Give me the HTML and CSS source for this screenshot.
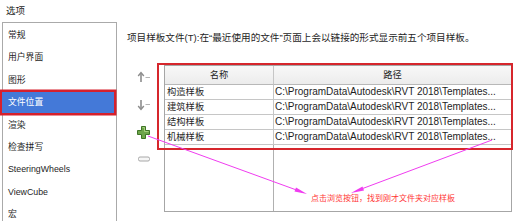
FILE: index.html
```html
<!DOCTYPE html>
<html lang="zh-CN">
<head>
<meta charset="utf-8">
<title>选项</title>
<link rel="stylesheet" href="styles.css">
</head>
<body>
<div class="page">
  <div class="title">选项</div>
  <div class="layout">
    <ul class="nav">
      <li class="nav-item">常规</li>
      <li class="nav-item">用户界面</li>
      <li class="nav-item">图形</li>
      <li class="nav-item selected">文件位置</li>
      <li class="nav-item">渲染</li>
      <li class="nav-item">检查拼写</li>
      <li class="nav-item">SteeringWheels</li>
      <li class="nav-item">ViewCube</li>
      <li class="nav-item">宏</li>
    </ul>
    <div class="content">
      <p class="desc">项目样板文件(T):在“最近使用的文件”页面上会以链接的形式显示前五个项目样板。</p>
      <div class="editor">
        <div class="tools">
          <svg class="tool" width="14" height="12" viewBox="0 0 14 12">
            <path d="M4 2.5 V11" stroke="#8c8c8c" stroke-width="1.6" fill="none"/>
            <path d="M1.2 5 L4 1.5 L6.8 5" stroke="#8c8c8c" stroke-width="1.4" fill="none"/>
            <path d="M8.5 6.5 H13" stroke="#b4b4b4" stroke-width="1" fill="none"/>
          </svg>
          <svg class="tool" width="14" height="12" viewBox="0 0 14 12">
            <path d="M4 1 V9.5" stroke="#8c8c8c" stroke-width="1.6" fill="none"/>
            <path d="M1.2 7 L4 10.5 L6.8 7" stroke="#8c8c8c" stroke-width="1.4" fill="none"/>
            <path d="M8.5 5.5 H13" stroke="#b4b4b4" stroke-width="1" fill="none"/>
          </svg>
          <svg class="tool" width="14" height="14" viewBox="0 0 14 14">
            <path d="M4.5 0.5 H8.5 V4.5 H12.5 V8.5 H8.5 V12.5 H4.5 V8.5 H0.5 V4.5 H4.5 Z" fill="#6ea54a" stroke="#3f7427" stroke-width="1"/>
            <path d="M5.5 1.5 H7.5 V5.5 H11.5" stroke="#a6d07f" stroke-width="1" fill="none"/>
          </svg>
          <svg class="tool" width="14" height="6" viewBox="0 0 14 6">
            <rect x="1.5" y="1" width="11" height="4" rx="1.5" fill="#f6f6f6" stroke="#a8a8a8" stroke-width="1"/>
          </svg>
        </div>
        <div class="grid">
          <div class="cell head">名称</div>
          <div class="cell head last">路径</div>
          <div class="cell name">构造样板</div>
          <div class="cell path last">C:\ProgramData\Autodesk\RVT 2018\Templates...</div>
          <div class="cell name">建筑样板</div>
          <div class="cell path last">C:\ProgramData\Autodesk\RVT 2018\Templates...</div>
          <div class="cell name">结构样板</div>
          <div class="cell path last">C:\ProgramData\Autodesk\RVT 2018\Templates...</div>
          <div class="cell name">机械样板</div>
          <div class="cell path last">C:\ProgramData\Autodesk\RVT 2018\Templates...</div>
          <div class="cell filler"></div>
          <div class="cell filler last"></div>
        </div>
      </div>
    </div>
  </div>

  <div class="callout-box"></div>
  <svg class="arrows" width="520" height="221" viewBox="0 0 520 221">
    <line x1="148" y1="136" x2="302" y2="192" stroke="#f03cf0" stroke-width="1"/>
    <polygon points="307,194 296,187.5 294.5,191.5" fill="#f03cf0"/>
    <line x1="492" y1="140" x2="356" y2="191" stroke="#f03cf0" stroke-width="1"/>
    <polygon points="351,193 362.5,186.5 364,190.5" fill="#f03cf0"/>
  </svg>
  <div class="callout-text">点击浏览按钮，找到刚才文件夹对应样板</div>
</div>
</body>
</html>
```

FILE: styles.css
```css
* { box-sizing: border-box; }

html, body {
  margin: 0;
  padding: 0;
  background: #ffffff;
}

.page {
  position: relative;
  width: 520px;
  height: 221px;
  overflow: hidden;
  font-family: "Liberation Sans", "Noto Sans CJK SC", sans-serif;
  font-size: 9.5px;
  color: #1e1e1e;
}

.title {
  height: 22px;
  line-height: 22px;
  padding-left: 6px;
  font-size: 9.5px;
}

.layout {
  display: flex;
  align-items: flex-start;
}

.nav {
  list-style: none;
  margin: 0 0 0 2px;
  padding: 1px 0 0 0;
  width: 115px;
  height: 210px;
  border: 1px solid #aaaaaa;
  border-bottom: none;
  flex: none;
  font-size: 8.8px;
}

.nav-item {
  height: 22.4px;
  line-height: 22.4px;
  padding-left: 5px;
  white-space: nowrap;
}

.nav-item.selected {
  background: #4479d8;
  color: #ffffff;
  margin: 0 1px 0 -2px;
  padding-left: 7px;
  box-shadow: 0 0 0 1.5px #d6202c, inset 0 0 0 1px #d6202c;
}

.content {
  margin-left: 10px;
  flex: 1;
}

.desc {
  margin: 9px 0 0 0;
  line-height: 14px;
  font-size: 9.6px;
  white-space: nowrap;
}

.editor {
  display: flex;
  margin-top: 20px;
}

.tools {
  width: 37px;
  padding: 6px 0 0 10px;
  display: flex;
  flex-direction: column;
  align-items: flex-start;
  gap: 15.5px;
}

.tool {
  display: block;
}

.grid {
  width: 348px;
  height: 147px;
  display: grid;
  grid-template-columns: 109px 1fr;
  grid-template-rows: 19px repeat(4, 15px) 1fr;
  border: 1px solid #a6a6a6;
}

.cell {
  border-right: 1px solid #c6c6c6;
  border-bottom: 1px solid #c6c6c6;
  padding-left: 2px;
  line-height: 14px;
  white-space: nowrap;
  overflow: hidden;
}

.cell.name {
  font-size: 9.3px;
}

.cell.path {
  font-size: 10px;
  padding-left: 1px;
}

.cell.last {
  border-right: none;
}

.cell.head {
  background: linear-gradient(#f8f8f8, #ececec);
  text-align: center;
  line-height: 18px;
  padding-left: 0;
  font-size: 9.3px;
  border-bottom-color: #b8b8b8;
}

.cell.filler {
  border-bottom: none;
  border-right-color: #b0b0b0;
}

.cell.filler.last {
  border-right: none;
}

.callout-box {
  position: absolute;
  left: 157px;
  top: 63px;
  width: 356px;
  height: 87px;
  border: 2px solid #d6262c;
}

.arrows {
  position: absolute;
  left: 0;
  top: 0;
  pointer-events: none;
}

.callout-text {
  position: absolute;
  left: 311px;
  top: 193px;
  line-height: 12px;
  font-size: 8px;
  color: #ff3636;
  white-space: nowrap;
}
```
